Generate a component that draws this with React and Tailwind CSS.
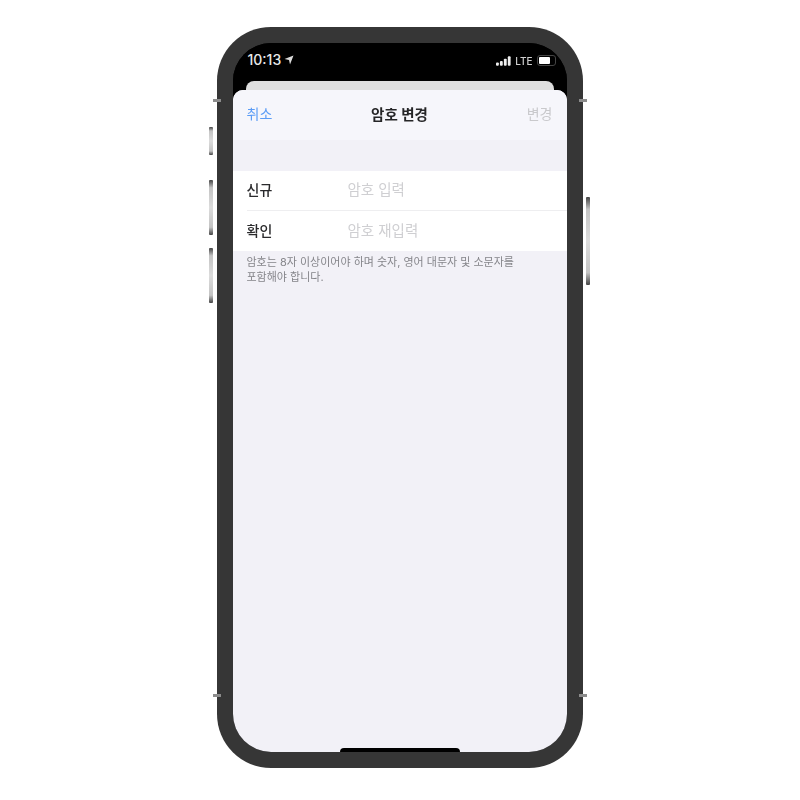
const KR = "font-['Inter','Noto_Sans_CJK_KR',sans-serif]";

function SideButton({ className }) {
  return (
    <div
      className={`absolute w-1 rounded-[1px] bg-[linear-gradient(to_bottom,#444,#c4c4c4_14%,#dcdcdc_50%,#c4c4c4_86%,#444)] ${className}`}
    />
  );
}

function StatusBar() {
  return (
    <div className="flex h-[38px] items-start justify-between bg-black pl-[15px] pr-[11px] pt-[9px] text-white">
      <div className="flex items-center gap-[3px]">
        <span className="text-[14px] font-medium leading-4 text-[#e8e8e8]">10:13</span>
        <svg width="10" height="10" viewBox="0 0 10 10">
          <path d="M9.5 .5 L.5 4 L5 5 L6 9.5 Z" fill="#ddd" />
        </svg>
      </div>
      <div className="flex items-center gap-1 pt-[3px]">
        <svg width="15" height="10" viewBox="0 0 16 10">
          <rect x="0" y="6.5" width="3" height="3.5" rx="1" fill="#eee" />
          <rect x="4.2" y="5" width="3" height="5" rx="1" fill="#eee" />
          <rect x="8.4" y="2.5" width="3" height="7.5" rx="1" fill="#eee" />
          <rect x="12.6" y="0" width="3" height="10" rx="1" fill="#eee" />
        </svg>
        <span className="text-[10px] font-medium leading-[10px] text-[#d0d0d0]">LTE</span>
        <div className="flex h-[11px] w-[19px] items-center rounded-[3px] border border-[#444] p-[1px]">
          <div className="h-full w-[11px] rounded-[1px] bg-white" />
        </div>
      </div>
    </div>
  );
}

function FieldRow({ label, placeholder, divider }) {
  return (
    <div className="pl-[14px]">
      <div className={`flex h-10 items-center ${divider ? "border-b border-[#eeeef0]" : ""}`}>
        <span className="w-[101px] pb-[2px] text-[14px] font-medium text-[#2a2a2c]">{label}</span>
        <span className="pb-[1px] text-[14.5px] text-[#cfcfd2]">{placeholder}</span>
      </div>
    </div>
  );
}

export default function App() {
  return (
    <div className={`flex h-[800px] w-[800px] items-start justify-center bg-white pr-[1px] pt-[27px] ${KR}`}>
      <div className="relative h-[741px] w-[366px] blur-[0.4px]">
        {/* hardware buttons */}
        <SideButton className="left-[-7.5px] top-[100px] h-[28px]" />
        <SideButton className="left-[-7.5px] top-[153px] h-[55px]" />
        <SideButton className="left-[-7.5px] top-[221px] h-[55px]" />
        <SideButton className="right-[-7.5px] top-[170px] h-[88px]" />

        {/* antenna marks */}
        <div className="absolute left-[-4px] top-[72px] h-[3px] w-2 bg-[#8c8c8c]" />
        <div className="absolute right-[-4px] top-[72px] h-[3px] w-2 bg-[#8c8c8c]" />
        <div className="absolute left-[-4px] top-[667px] h-[3px] w-2 bg-[#8c8c8c]" />
        <div className="absolute right-[-4px] top-[667px] h-[3px] w-2 bg-[#8c8c8c]" />

        <div className="h-full w-full rounded-[54px] bg-[#363636] p-4">
          <div className="relative flex h-full flex-col overflow-hidden rounded-[38px] bg-black">
            <StatusBar />

            {/* card behind the sheet */}
            <div className="mx-[13px] h-[9px] rounded-t-[8px] bg-[#dedede]" />

            {/* sheet */}
            <div className="flex flex-1 flex-col rounded-t-[10px] bg-[#f2f1f7]">
              <div className="flex h-[50px] items-center justify-between rounded-t-[10px] bg-[#f6f6fb] px-[14px]">
                <span className="pb-[3px] text-[14px] text-[#5b9cf6]">취소</span>
                <span className="text-[14.5px] font-bold text-[#252527]">암호 변경</span>
                <span className="pb-[3px] text-[14px] text-[#c9c9cc]">변경</span>
              </div>

              <div className="mt-[31px] bg-white">
                <FieldRow label="신규" placeholder="암호 입력" divider />
                <FieldRow label="확인" placeholder="암호 재입력" />
              </div>

              <p className="pl-[14px] pr-[40px] pt-1 text-[11px] leading-[15px] text-[#85858a]">
                암호는 8자 이상이어야 하며 숫자, 영어 대문자 및 소문자를
                <br />
                포함해야 합니다.
              </p>
            </div>

            {/* home indicator */}
            <div className="absolute bottom-0 left-1/2 h-1 w-[120px] -translate-x-1/2 rounded-t-full bg-black" />
          </div>
        </div>
      </div>
    </div>
  );
}
